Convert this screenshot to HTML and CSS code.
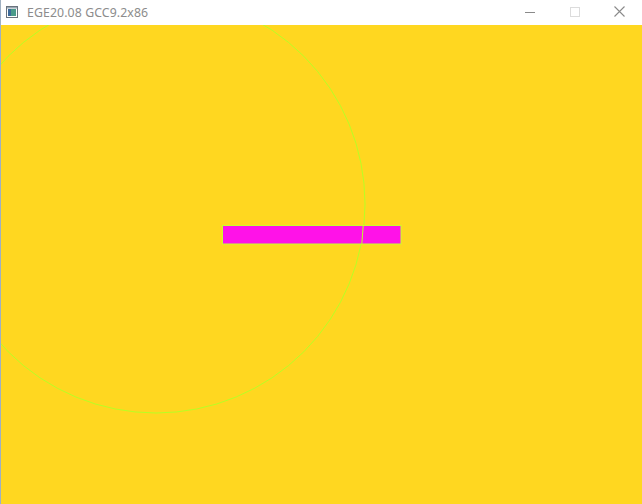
FILE: index.html
```html
<!DOCTYPE html>
<html>
<head>
<meta charset="utf-8">
<link rel="stylesheet" href="styles.css">
</head>
<body>
<div class="window">
  <div class="titlebar">
    <svg class="app-icon" width="12" height="12" viewBox="0 0 12 12">
      <rect x="0.5" y="0.5" width="11" height="11" fill="#ffffff" stroke="#6a737d"/>
      <rect x="2" y="3" width="8" height="7" fill="#4a9a8a"/>
      <rect x="2" y="3" width="3" height="7" fill="#3d6a9a"/>
      <rect x="1" y="1" width="10" height="1.5" fill="#9aa8b4"/>
    </svg>
    <span class="title">EGE20.08 GCC9.2x86</span>
    <div class="controls">
      <div class="ctl"><svg width="10" height="10" viewBox="0 0 10 10"><line x1="0" y1="5.5" x2="10" y2="5.5" stroke="#8a8a8a" stroke-width="1"/></svg></div>
      <div class="ctl"><svg width="10" height="10" viewBox="0 0 10 10"><rect x="0.5" y="0.5" width="9" height="9" fill="none" stroke="#dcdcdc" stroke-width="1"/></svg></div>
      <div class="ctl"><svg width="11" height="11" viewBox="0 0 11 11"><path d="M0.5 0.5 L10.5 10.5 M10.5 0.5 L0.5 10.5" stroke="#8a8a8a" stroke-width="1.1" fill="none"/></svg></div>
    </div>
  </div>
  <div class="client">
    <svg class="canvas" viewBox="1 25 641 479" width="641" height="479">
      <circle cx="156" cy="204" r="209" fill="none" stroke="#b8ff24" stroke-width="1"/>
      <rect x="222.5" y="225.5" width="178.5" height="18.5" fill="#ff12e8" stroke="#c8ff30" stroke-width="1"/>
      <line x1="363.2" y1="226" x2="361.8" y2="244" stroke="#c0ff20" stroke-width="1"/>
    </svg>
  </div>
</div>
</body>
</html>
```

FILE: styles.css
```css
html, body {
  margin: 0;
  padding: 0;
  width: 642px;
  height: 504px;
  overflow: hidden;
  background: #ffffff;
}
.window {
  width: 642px;
  height: 504px;
  display: flex;
  flex-direction: column;
  border-left: 1px solid #9fb0c2;
  box-sizing: border-box;
}
.titlebar {
  height: 25px;
  flex: none;
  background: #ffffff;
  display: flex;
  align-items: center;
  font-family: "Noto Sans", "Open Sans", sans-serif;
  font-size: 12.3px;
  color: #8c8c8c;
}
.app-icon {
  margin-left: 5px;
  margin-top: -1px;
}
.title {
  margin-left: 9px;
  letter-spacing: 0.1px;
  margin-top: -1px;
}
.controls {
  margin-left: auto;
  display: flex;
  height: 25px;
}
.ctl {
  width: 45px;
  height: 25px;
  display: flex;
  align-items: center;
  justify-content: center;
}
.ctl svg {
  margin-top: -2px;
}
.client {
  flex: 1;
  background: #ffd720;
  overflow: hidden;
}
.canvas {
  display: block;
}
```
